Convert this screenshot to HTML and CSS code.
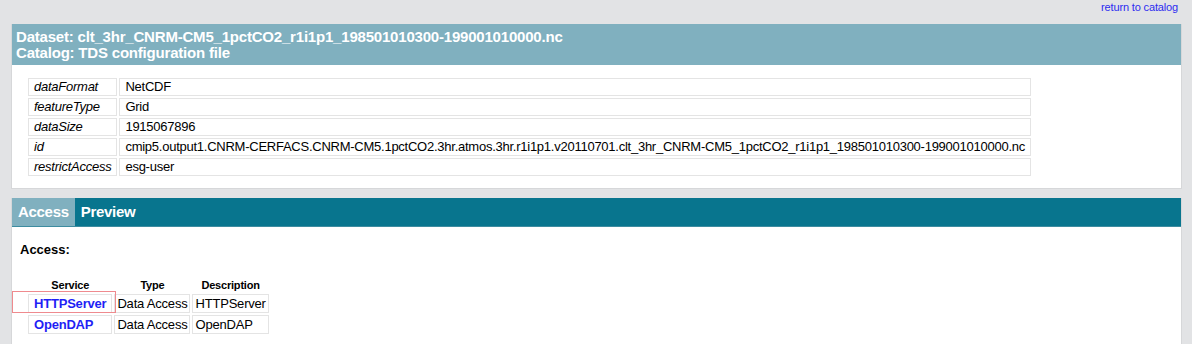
FILE: index.html
```html
<!DOCTYPE html>
<html lang="en">
<head>
    <meta charset="UTF-8">
    <title>Dataset: clt_3hr_CNRM-CM5_1pctCO2_r1i1p1_198501010300-199001010000.nc</title>
    <link rel="stylesheet" href="styles.css">
</head>
<body>
    <div class="topnav">
        <a href="#">return to catalog</a>
    </div>
    <div class="panel">
        <div class="panel-head">
            Dataset: clt_3hr_CNRM-CM5_1pctCO2_r1i1p1_198501010300-199001010000.nc<br>
            Catalog: TDS configuration file
        </div>
        <div class="panel-body">
            <table class="props">
                <tr><td class="key">dataFormat</td><td>NetCDF</td></tr>
                <tr><td class="key">featureType</td><td>Grid</td></tr>
                <tr><td class="key">dataSize</td><td>1915067896</td></tr>
                <tr><td class="key">id</td><td>cmip5.output1.CNRM-CERFACS.CNRM-CM5.1pctCO2.3hr.atmos.3hr.r1i1p1.v20110701.clt_3hr_CNRM-CM5_1pctCO2_r1i1p1_198501010300-199001010000.nc</td></tr>
                <tr><td class="key">restrictAccess</td><td>esg-user</td></tr>
            </table>
        </div>
    </div>

    <div class="panel tabs-panel">
        <div class="tabs">
            <span class="tab active">Access</span>
            <span class="tab">Preview</span>
        </div>
        <div class="tab-body">
            <h3>Access:</h3>
            <table class="services">
                <tr>
                    <th>Service</th>
                    <th>Type</th>
                    <th>Description</th>
                </tr>
                <tr>
                    <td class="svc focused"><a href="#">HTTPServer</a></td>
                    <td>Data Access</td>
                    <td>HTTPServer</td>
                </tr>
                <tr>
                    <td class="svc"><a href="#">OpenDAP</a></td>
                    <td>Data Access</td>
                    <td>OpenDAP</td>
                </tr>
            </table>
        </div>
    </div>
</body>
</html>
```

FILE: styles.css
```css
body {
    font-family: "Liberation Sans", Arial, sans-serif;
    margin: 0;
    padding: 0 10px 0 11px;
    background-color: #e2e3e5;
    color: #000;
    overflow: hidden;
}
.topnav {
    height: 23px;
    padding: 1px 4px 0 0;
    text-align: right;
    font-size: 11px;
    line-height: 13px;
    letter-spacing: -0.15px;
}
.topnav a {
    color: #2c2cf0;
    text-decoration: none;
}
.panel {
    background-color: #fff;
    border: 1px solid #d6d7d9;
    border-top: none;
}
.panel-head {
    background-color: #80b0bf;
    color: #fff;
    font-weight: bold;
    font-size: 15px;
    letter-spacing: -0.2px;
    line-height: 16px;
    padding: 5px 4px 4px;
    height: 32px;
}
.panel-body {
    padding: 11px 14px 10px;
}
.props {
    border-spacing: 2px;
    font-size: 13px;
    letter-spacing: -0.25px;
}
.props td {
    border: 1px solid #e4e4e4;
    padding: 0 5px;
    height: 16px;
    line-height: 16px;
}
.props td.key {
    font-style: italic;
    width: 75px;
}
.tabs-panel {
    margin-top: 9px;
    height: 146px;
    border-bottom: none;
}
.tabs {
    background-color: #08758e;
    border-bottom: 1px solid #3d8ca0;
    display: flex;
    height: 28px;
}
.tab {
    color: #fff;
    font-weight: bold;
    font-size: 15px;
    letter-spacing: -0.3px;
    line-height: 28px;
    padding: 0 6px;
}
.tab.active {
    background-color: #80b0bf;
}
.tab-body {
    padding: 15px 8px;
}
h3 {
    font-size: 13px;
    margin: 0 0 20px;
}
.services {
    border-spacing: 2px;
    font-size: 13px;
    letter-spacing: -0.2px;
    margin-left: 6px;
}
.services th {
    font-size: 11px;
    padding: 0 2px;
    line-height: 13px;
}
.services td {
    border: 1px solid #e4e4e4;
    padding: 0 2px;
    height: 17px;
}
.services td.svc {
    padding: 0 5px;
}
.services a {
    color: #1f1ff5;
    font-weight: bold;
    text-decoration: none;
}
.focused {
    position: relative;
}
.focused::after {
    content: "";
    position: absolute;
    left: -17px;
    right: -5px;
    top: -4px;
    bottom: -1px;
    border: 1px solid #ef8a8e;
}
```
